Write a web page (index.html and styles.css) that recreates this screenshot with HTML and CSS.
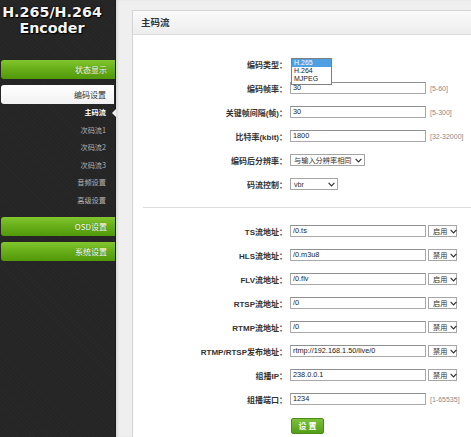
FILE: index.html
```html
<!DOCTYPE html>
<html lang="zh-CN">
<head>
<meta charset="utf-8">
<title>H.265/H.264 Encoder</title>
<link rel="stylesheet" href="styles.css">
</head>
<body>
<div class="page">
  <aside class="sidebar">
    <div class="brand">H.265/H.264<br>Encoder</div>
    <nav class="nav">
      <a class="nav-item green">状态显示</a>
      <a class="nav-item active">编码设置</a>
      <ul class="sub">
        <li class="current">主码流</li>
        <li>次码流1</li>
        <li>次码流2</li>
        <li>次码流3</li>
        <li>音频设置</li>
        <li>高级设置</li>
      </ul>
      <a class="nav-item green osd">OSD设置</a>
      <a class="nav-item green">系统设置</a>
    </nav>
  </aside>
  <main class="main">
    <section class="panel">
      <header class="panel-head">主码流</header>
      <div class="panel-body">
        <div class="form-section top">
          <div class="row">
            <label class="lbl">编码类型：</label>
            <div class="field listwrap">
              <ul class="listbox">
                <li class="sel">H.265</li>
                <li>H.264</li>
                <li>MJPEG</li>
              </ul>
            </div>
          </div>
          <div class="row">
            <label class="lbl">编码帧率：</label>
            <div class="field"><span class="input">30</span><span class="hint">[5-60]</span></div>
          </div>
          <div class="row">
            <label class="lbl">关键帧间隔(帧)：</label>
            <div class="field"><span class="input">30</span><span class="hint">[5-300]</span></div>
          </div>
          <div class="row">
            <label class="lbl">比特率(kbit)：</label>
            <div class="field"><span class="input">1800</span><span class="hint">[32-32000]</span></div>
          </div>
          <div class="row">
            <label class="lbl">编码后分辨率：</label>
            <div class="field"><span class="select w-res">与输入分辨率相同<svg class="chev" width="7" height="5" viewBox="0 0 7 5"><path d="M0.6 0.8 L3.5 3.8 L6.4 0.8" fill="none" stroke="#333" stroke-width="1.2"/></svg></span></div>
          </div>
          <div class="row">
            <label class="lbl">码流控制：</label>
            <div class="field"><span class="select w-vbr">vbr<svg class="chev" width="7" height="5" viewBox="0 0 7 5"><path d="M0.6 0.8 L3.5 3.8 L6.4 0.8" fill="none" stroke="#333" stroke-width="1.2"/></svg></span></div>
          </div>
        </div>
        <hr class="divider">
        <div class="form-section">
          <div class="row">
            <label class="lbl">TS流地址：</label>
            <div class="field"><span class="input">/0.ts</span><span class="select w-en">启用<svg class="chev" width="7" height="5" viewBox="0 0 7 5"><path d="M0.6 0.8 L3.5 3.8 L6.4 0.8" fill="none" stroke="#333" stroke-width="1.2"/></svg></span></div>
          </div>
          <div class="row">
            <label class="lbl">HLS流地址：</label>
            <div class="field"><span class="input">/0.m3u8</span><span class="select w-en">禁用<svg class="chev" width="7" height="5" viewBox="0 0 7 5"><path d="M0.6 0.8 L3.5 3.8 L6.4 0.8" fill="none" stroke="#333" stroke-width="1.2"/></svg></span></div>
          </div>
          <div class="row">
            <label class="lbl">FLV流地址：</label>
            <div class="field"><span class="input">/0.flv</span><span class="select w-en">启用<svg class="chev" width="7" height="5" viewBox="0 0 7 5"><path d="M0.6 0.8 L3.5 3.8 L6.4 0.8" fill="none" stroke="#333" stroke-width="1.2"/></svg></span></div>
          </div>
          <div class="row">
            <label class="lbl">RTSP流地址：</label>
            <div class="field"><span class="input">/0</span><span class="select w-en">启用<svg class="chev" width="7" height="5" viewBox="0 0 7 5"><path d="M0.6 0.8 L3.5 3.8 L6.4 0.8" fill="none" stroke="#333" stroke-width="1.2"/></svg></span></div>
          </div>
          <div class="row">
            <label class="lbl">RTMP流地址：</label>
            <div class="field"><span class="input">/0</span><span class="select w-en">禁用<svg class="chev" width="7" height="5" viewBox="0 0 7 5"><path d="M0.6 0.8 L3.5 3.8 L6.4 0.8" fill="none" stroke="#333" stroke-width="1.2"/></svg></span></div>
          </div>
          <div class="row">
            <label class="lbl">RTMP/RTSP发布地址：</label>
            <div class="field"><span class="input">rtmp://192.168.1.50/live/0</span><span class="select w-en">禁用<svg class="chev" width="7" height="5" viewBox="0 0 7 5"><path d="M0.6 0.8 L3.5 3.8 L6.4 0.8" fill="none" stroke="#333" stroke-width="1.2"/></svg></span></div>
          </div>
          <div class="row">
            <label class="lbl">组播IP：</label>
            <div class="field"><span class="input">238.0.0.1</span><span class="select w-en">禁用<svg class="chev" width="7" height="5" viewBox="0 0 7 5"><path d="M0.6 0.8 L3.5 3.8 L6.4 0.8" fill="none" stroke="#333" stroke-width="1.2"/></svg></span></div>
          </div>
          <div class="row">
            <label class="lbl">组播端口：</label>
            <div class="field"><span class="input">1234</span><span class="hint">[1-65535]</span></div>
          </div>
          <div class="row btn-row">
            <span class="lbl"></span>
            <div class="field"><button class="btn">设 置</button></div>
          </div>
        </div>
      </div>
    </section>
  </main>
</div>
</body>
</html>
```

FILE: styles.css
```css
* { box-sizing: border-box; }

html, body {
  margin: 0;
  padding: 0;
  height: 100%;
  overflow: hidden;
}

body {
  font-family: "Liberation Sans", "Noto Sans CJK SC", sans-serif;
  color: #333;
  background: #efefef;
}

.page {
  display: flex;
  min-height: 100vh;
}

/* ---------- sidebar ---------- */
.sidebar {
  width: 116px;
  flex: none;
  background: #252525;
  background-image: repeating-linear-gradient(45deg, rgba(255,255,255,0.015) 0 1px, transparent 1px 3px);
  border-right: 1px solid #1a1a1a;
}

.brand {
  padding: 5px 11px 0 0;
  height: 60px;
  text-align: center;
  font-family: "DejaVu Sans", sans-serif;
  font-weight: bold;
  font-size: 14.3px;
  line-height: 15.5px;
  color: #f4f4f4;
  text-shadow: 1px 1px 1px #000, 0 0 2px #000;
}

.nav {
  display: flex;
  flex-direction: column;
}

.nav-item {
  display: block;
  height: 19px;
  line-height: 19px;
  margin-left: 1px;
  margin-bottom: 6px;
  padding-right: 8px;
  text-align: right;
  font-family: "Noto Sans CJK SC", sans-serif;
  font-size: 8px;
  border-radius: 3px 0 0 3px;
}

.nav-item.green {
  color: #fff;
  background: linear-gradient(to bottom, #82c62e 0%, #66ad18 50%, #52990b 100%);
  text-shadow: 0 0 1px rgba(0,0,0,0.35);
}

.nav-item.active {
  color: #333;
  background: linear-gradient(to bottom, #ffffff, #f1f1f1);
  margin-right: 1px;
  margin-bottom: 0;
}

.nav-item.osd {
  margin-top: 7px;
}

.sub {
  list-style: none;
  margin: 0;
  padding: 0;
}

.sub li {
  position: relative;
  height: 17.6px;
  line-height: 17.6px;
  padding-right: 9px;
  text-align: right;
  font-family: "Noto Sans CJK SC", sans-serif;
  font-size: 7.2px;
  color: #b3b3b3;
}

.sub li.current {
  color: #fff;
  font-weight: bold;
}

.sub li.current::after {
  content: "";
  position: absolute;
  right: -1px;
  top: 5px;
  border-top: 4px solid transparent;
  border-bottom: 4px solid transparent;
  border-right: 4px solid #efefef;
}

/* ---------- main ---------- */
.main {
  flex: 1;
  padding: 10px 0 0 16px;
  background: #efefef;
  box-shadow: inset 2px 0 2px rgba(0,0,0,0.08);
}

.panel {
  background: #fff;
  border: 1px solid #d4d4d4;
  border-right: none;
  border-bottom: none;
  min-height: 100%;
}

.panel-head {
  height: 24px;
  line-height: 23px;
  padding-left: 8px;
  border-bottom: 1px solid #dcdcdc;
  background: linear-gradient(to bottom, #fafafa, #ededed);
  font-family: "Noto Sans CJK SC", sans-serif;
  font-weight: bold;
  font-size: 9.5px;
  color: #333;
}

.panel-body {
  padding-left: 10px;
}

.form-section {
  padding-top: 11px;
}

.form-section.top {
  padding-top: 17px;
}

.divider {
  margin: 11px 0 0;
  border: none;
  border-top: 1px solid #dedede;
  height: 0;
}

.row {
  display: flex;
  align-items: center;
  height: 24px;
}

.lbl {
  width: 144px;
  flex: none;
  text-align: right;
  font-weight: bold;
  font-size: 8px;
  color: #333;
  white-space: nowrap;
}

.field {
  display: flex;
  align-items: center;
  margin-left: 3px;
}

.input {
  display: inline-block;
  width: 136px;
  height: 12px;
  line-height: 10px;
  padding: 0 2px;
  border: 1px solid #a9a9a9;
  border-top-color: #8f8f8f;
  background: #fff;
  font-size: 7.3px;
  color: #222;
  white-space: nowrap;
  overflow: hidden;
}

.hint {
  margin-left: 4px;
  font-size: 7px;
  color: #8a8a8a;
}

.select {
  display: inline-flex;
  align-items: center;
  justify-content: space-between;
  height: 12px;
  padding: 0 2px 0 3px;
  border: 1px solid #a5a5a5;
  background: #fff;
  font-size: 7.2px;
  color: #333;
  white-space: nowrap;
}

.chev {
  flex: none;
  margin-left: 3px;
}

.w-res { width: 75px; }
.w-vbr { width: 48px; }
.w-en { width: 29px; margin-left: 2px; padding-left: 4px; }

/* open list of 编码类型 */
.listwrap {
  position: relative;
  width: 136px;
  height: 12px;
}

.listbox {
  position: absolute;
  left: 1px;
  top: 0;
  z-index: 2;
  width: 41px;
  margin: 0;
  padding: 0;
  list-style: none;
  border: 1px solid #7f7f7f;
  background: #fff;
}

.listbox li {
  height: 8.2px;
  line-height: 8.2px;
  padding-left: 2px;
  font-size: 7px;
  color: #222;
}

.listbox li.sel {
  background: #4f9fe3;
  color: #fff;
}

.btn-row {
  margin-top: 7px;
  height: 16px;
}

.btn {
  width: 33px;
  height: 16px;
  margin: 0 0 0 1px;
  padding: 0;
  border: 1px solid #4b8c18;
  border-radius: 2px;
  background: linear-gradient(to bottom, #7cc13a, #539e18);
  color: #fff;
  font-family: "Noto Sans CJK SC", sans-serif;
  font-weight: bold;
  font-size: 8px;
  line-height: 14px;
}
```
